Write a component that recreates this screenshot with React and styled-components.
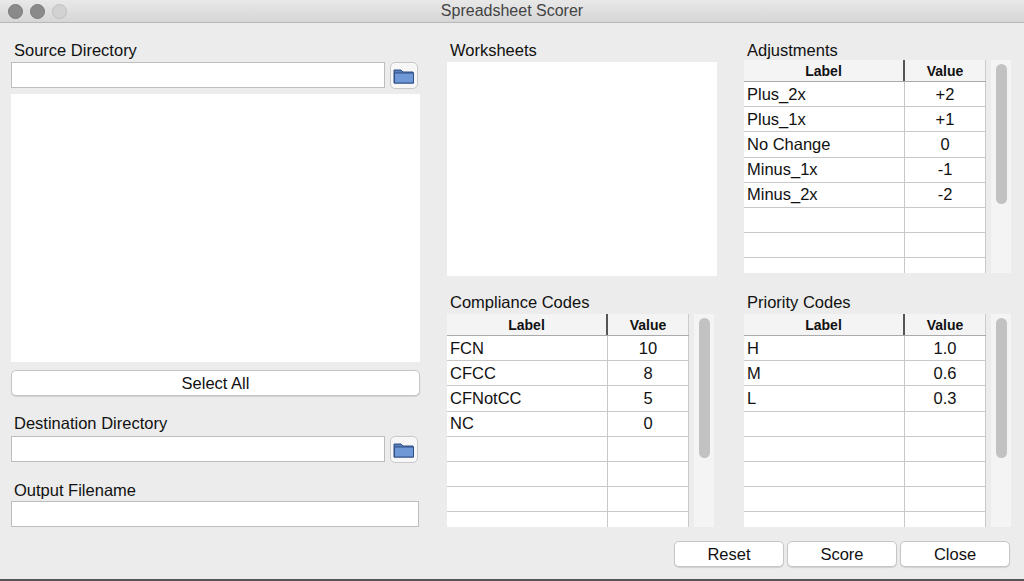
import React from "react";
import styled, { createGlobalStyle } from "styled-components";

const Global = createGlobalStyle`
  html,body{margin:0;padding:0;background:#ececec;}
  body{font-family:"Liberation Sans",Arial,sans-serif;color:#111;}
`;
const Win = styled.div`width:1024px;height:581px;display:flex;flex-direction:column;background:#ececec;overflow:hidden;border-bottom:2px solid #555;box-sizing:border-box;`;
const TitleBar = styled.div`height:22px;flex:none;display:flex;align-items:center;position:relative;background:linear-gradient(#e8e8e8,#d6d6d6);border-bottom:1px solid #b8b8b8;`;
const Dots = styled.div`display:flex;gap:7px;padding-left:8px;`;
const Dot = styled.span`width:15px;height:15px;border-radius:50%;background:${p=>p.$light?"#d2d2d2":"#8a8a8a"};border:1px solid ${p=>p.$light?"#c0c0c0":"#7a7a7a"};box-sizing:border-box;`;
const Title = styled.div`position:absolute;left:0;right:0;text-align:center;font-size:16px;color:#444;pointer-events:none;`;
const Body = styled.div`flex:1;display:grid;grid-template-columns:409px 270px 267px;column-gap:27px;padding:17px 14px 0 11px;`;
const Col = styled.div`display:flex;flex-direction:column;`;
const Label = styled.div`font-size:16.5px;height:20px;line-height:20px;margin-left:3px;`;
const Row = styled.div`display:flex;align-items:center;gap:5px;`;
const Input = styled.div`height:26px;width:${p=>p.$w||"374px"};background:#fff;border:1px solid #bdbdbd;box-sizing:border-box;`;
const FolderBtn = styled.div`width:28px;height:27px;border-radius:5px;background:#f7f7f7;border:1px solid #c8c8c8;box-sizing:border-box;display:flex;align-items:center;justify-content:center;margin-top:2px;`;
const Box = styled.div`background:#fff;height:${p=>p.$h}px;margin-top:${p=>p.$mt||0}px;`;
const Btn = styled.div`height:26px;width:${p=>p.$w||"100%"};background:#fff;border:1px solid #c6c6c6;border-radius:5px;box-sizing:border-box;display:flex;align-items:center;justify-content:center;font-size:16.5px;box-shadow:0 1px 1px rgba(0,0,0,0.12);`;
const TableWrap = styled.div`display:flex;gap:5px;height:213px;margin-top:${p=>p.$mt||0}px;`;
const Table = styled.div`width:242px;background:#fff;overflow:hidden;`;
const Head = styled.div`display:grid;grid-template-columns:161px 81px;height:22px;box-sizing:border-box;background:#f4f4f4;border-bottom:1px solid #aaa;font-size:14px;font-weight:bold;`;
const HCell = styled.div`display:flex;align-items:center;justify-content:center;border-right:${p=>p.$sep?"2px solid #555":"1px solid #ccc"};`;
const TRow = styled.div`display:grid;grid-template-columns:161px 81px;height:25.2px;box-sizing:border-box;border-bottom:1px solid #c8c8c8;font-size:16.5px;&:first-of-type{margin-top:2px;}`;
const Cell = styled.div`display:flex;align-items:center;justify-content:${p=>p.$c?"center":"flex-start"};padding-left:${p=>p.$c?0:3}px;border-right:1px solid #c8c8c8;`;
const Track = styled.div`width:20px;background:#f4f4f4;display:flex;justify-content:center;padding-top:4px;box-sizing:border-box;`;
const Thumb = styled.div`width:11px;height:140px;border-radius:6px;background:#c2c2c2;`;
const Footer = styled.div`display:flex;justify-content:flex-end;gap:3px;padding:0 14px 12px 0;`;
const Spacer = styled.div`margin-top:${p=>p.$mt}px;`;

const Folder = () => (
  <svg width="22" height="18" viewBox="0 0 22 18">
    <path d="M1 3h7l2 2h10v11H1z" fill="#5a7fb8" stroke="#2f4f86" strokeWidth="1"/>
    <rect x="1.5" y="6" width="19" height="10" fill="#6f98d6" stroke="#2f4f86"/>
  </svg>
);

const DataTable = ({ rows, mt }) => (
  <TableWrap $mt={mt}>
    <Table>
      <Head><HCell $sep>Label</HCell><HCell>Value</HCell></Head>
      {Array.from({ length: 8 }).map((_, i) => (
        <TRow key={i}><Cell>{rows[i]?.[0]}</Cell><Cell $c>{rows[i]?.[1]}</Cell></TRow>
      ))}
    </Table>
    <Track><Thumb /></Track>
  </TableWrap>
);

export default function App() {
  return (
    <Win>
      <Global />
      <TitleBar>
        <Dots><Dot /><Dot /><Dot $light /></Dots>
        <Title>Spreadsheet Scorer</Title>
      </TitleBar>
      <Body>
        <Col>
          <Label>Source Directory</Label>
          <Row><Input /><FolderBtn><Folder /></FolderBtn></Row>
          <Box $h={268} $mt={5} />
          <Spacer $mt={8}><Btn>Select All</Btn></Spacer>
          <Spacer $mt={17}><Label>Destination Directory</Label></Spacer>
          <Row style={{ marginTop: 1 }}><Input /><FolderBtn><Folder /></FolderBtn></Row>
          <Spacer $mt={17}><Label>Output Filename</Label></Spacer>
          <Input $w="408px" style={{ marginTop: 1 }} />
        </Col>
        <Col>
          <Label>Worksheets</Label>
          <Box $h={214} $mt={2} style={{ width: 270 }} />
          <Spacer $mt={16}><Label>Compliance Codes</Label></Spacer>
          <DataTable mt={2} rows={[["FCN","10"],["CFCC","8"],["CFNotCC","5"],["NC","0"]]} />
        </Col>
        <Col>
          <Label>Adjustments</Label>
          <DataTable mt={0} rows={[["Plus_2x","+2"],["Plus_1x","+1"],["No Change","0"],["Minus_1x","-1"],["Minus_2x","-2"]]} />
          <Spacer $mt={19}><Label>Priority Codes</Label></Spacer>
          <DataTable mt={2} rows={[["H","1.0"],["M","0.6"],["L","0.3"]]} />
        </Col>
      </Body>
      <Footer>
        <Btn $w="110px">Reset</Btn>
        <Btn $w="110px">Score</Btn>
        <Btn $w="110px">Close</Btn>
      </Footer>
    </Win>
  );
}
